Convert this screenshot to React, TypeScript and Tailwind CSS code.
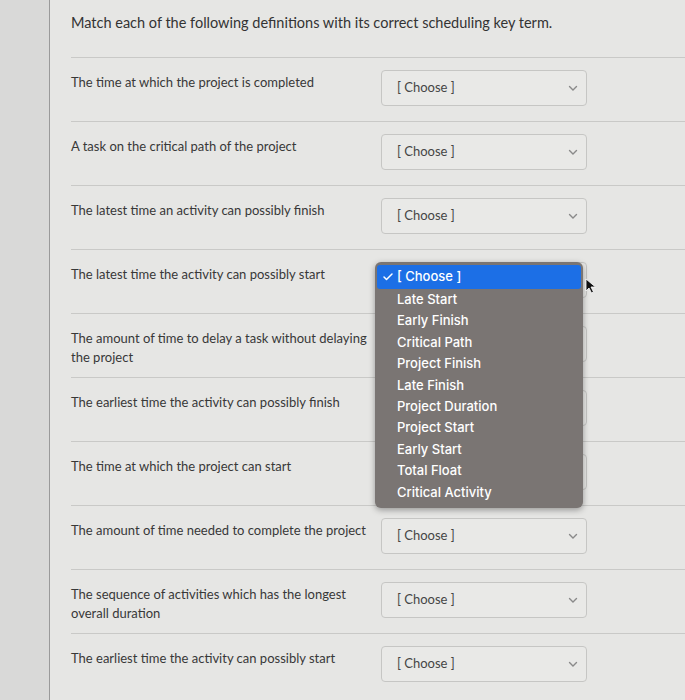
import { Check } from "lucide-react";

const rows = [
  "The time at which the project is completed",
  "A task on the critical path of the project",
  "The latest time an activity can possibly finish",
  "The latest time the activity can possibly start",
  "The amount of time to delay a task without delaying the project",
  "The earliest time the activity can possibly finish",
  "The time at which the project can start",
  "The amount of time needed to complete the project",
  "The sequence of activities which has the longest overall duration",
  "The earliest time the activity can possibly start",
];

const options = [
  "Late Start",
  "Early Finish",
  "Critical Path",
  "Project Finish",
  "Late Finish",
  "Project Duration",
  "Project Start",
  "Early Start",
  "Total Float",
  "Critical Activity",
];

function Chevron() {
  return (
    <svg width="10" height="7" viewBox="0 0 10 7" className="text-[#8a8a8a]">
      <path d="M1.5 1.5 L5 5 L8.5 1.5" fill="none" stroke="currentColor" strokeWidth="1.4" strokeLinecap="round" />
    </svg>
  );
}

// covered = hidden behind the open menu, so no label is drawn
function Select({ covered }: { covered?: boolean }) {
  return (
    <div className="w-[206px] h-[36px] shrink-0 border border-[#c6c6c4] rounded-[4px] bg-[#e9e9e7] flex items-center justify-between pl-[15px] pr-[8px]">
      <span className="text-[13px] text-[#454545]">{covered ? "" : "[ Choose ]"}</span>
      <Chevron />
    </div>
  );
}

function Menu() {
  return (
    <div className="absolute left-[-6px] top-[0px] w-[208px] rounded-[6px] bg-[#7a7573] shadow-[0_2px_6px_rgba(0,0,0,0.35)] pt-[3px] pb-[5px] px-[2px] font-['Inter',sans-serif] text-white text-[13px] font-medium z-10">
      <div className="h-[24px] rounded-[3px] bg-[#1c6fe6] flex items-center pl-[5px]">
        <Check className="w-[12px] h-[12px] mr-[3px]" strokeWidth={3} />
        <span>[ Choose ]</span>
      </div>
      {options.map((o) => (
        <div key={o} className="h-[21.4px] leading-[21.4px] pl-[20px]">
          {o}
        </div>
      ))}
    </div>
  );
}

function Cursor() {
  return (
    <svg width="12" height="16" viewBox="0 0 12 16" className="absolute left-[204px] top-[16px] z-20">
      <path d="M1 1 L1 13 L4 10 L6.5 15 L8.5 14 L6 9 L10.5 9 Z" fill="#111" stroke="#fff" strokeWidth="0.8" />
    </svg>
  );
}

export default function App() {
  return (
    <div className="w-[685px] h-[700px] overflow-hidden flex bg-[#e6e6e4] font-['Lato',sans-serif] text-[#383838]">
      <div className="w-[50px] shrink-0 bg-[#d9d9d8] border-r border-[#9a9a9a]" />
      <div className="flex-1 pl-[21px]">
        <h1 className="h-[57px] pt-[12px] text-[14.5px] text-[#333]">
          Match each of the following definitions with its correct scheduling key term.
        </h1>
        {rows.map((r, i) => (
          <div key={i} className="h-[64px] border-t border-[#c9c9c7] flex items-start">
            <div className="w-[310px] pr-[6px] pt-[15px] text-[13px] leading-[19px]">{r}</div>
            <div className="relative mt-[12px]">
              <Select covered={i >= 3 && i <= 6} />
              {i === 3 && (
                <>
                  <Menu />
                  <Cursor />
                </>
              )}
            </div>
          </div>
        ))}
      </div>
    </div>
  );
}
